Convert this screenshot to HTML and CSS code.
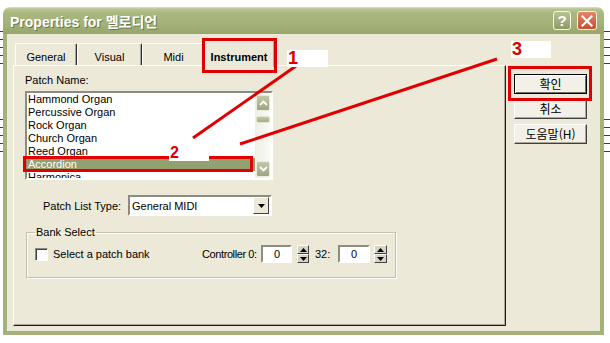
FILE: index.html
```html
<!DOCTYPE html>
<html lang="ko">
<head>
  <meta charset="UTF-8">
  <meta name="viewport" content="width=device-width, initial-scale=1.0">
  <title>Properties for 멜로디언</title>
  <link rel="stylesheet" href="styles.css">
</head>
<body>
  <!-- Score staves peeking out behind the dialog -->
  <div class="staves">
    <div class="staff staff-top"></div>
    <div class="staff staff-bottom"></div>
  </div>

  <!-- Dialog window -->
  <div class="window">
    <div class="titlebar">
      <span class="title">Properties for 멜로디언</span>
      <div class="caption-buttons">
        <span class="cap-btn help">?</span>
        <span class="cap-btn close">
          <svg width="12" height="12" viewBox="0 0 12 12"><path d="M1.5 1.5 L10.5 10.5 M10.5 1.5 L1.5 10.5" stroke="#fff" stroke-width="2.2" stroke-linecap="square"/></svg>
        </span>
      </div>
    </div>

    <div class="client">
      <div class="sheet">
        <div class="tabs">
          <div class="tab tab-general">General</div>
          <div class="tab tab-visual">Visual</div>
          <div class="tab tab-midi">Midi</div>
          <div class="tab tab-instrument active">Instrument</div>
        </div>

        <div class="panel">
          <div class="field-label">Patch Name:</div>
          <div class="listbox">
            <ul class="items">
              <li>Hammond Organ</li>
              <li>Percussive Organ</li>
              <li>Rock Organ</li>
              <li>Church Organ</li>
              <li>Reed Organ</li>
              <li class="selected">Accordion</li>
              <li>Harmonica</li>
            </ul>
            <div class="vscroll">
              <span class="sb-btn sb-up">
                <svg width="9" height="6" viewBox="0 0 9 6"><path d="M1 5 L4.5 1.5 L8 5" fill="none" stroke="#fff" stroke-width="1.8"/></svg>
              </span>
              <span class="sb-thumb"></span>
              <span class="sb-btn sb-down">
                <svg width="9" height="6" viewBox="0 0 9 6"><path d="M1 1 L4.5 4.5 L8 1" fill="none" stroke="#fff" stroke-width="1.8"/></svg>
              </span>
            </div>
          </div>

          <div class="type-row">
            <span class="type-label">Patch List Type:</span>
            <div class="combo">
              <span class="combo-text">General MIDI</span>
              <span class="drop-btn">
                <svg width="7" height="4" viewBox="0 0 7 4"><path d="M0 0 H7 L3.5 4 Z" fill="#000"/></svg>
              </span>
            </div>
          </div>

          <fieldset class="group">
            <legend>Bank Select</legend>
            <div class="bank-row">
              <span class="checkbox"></span>
              <span class="check-label">Select a patch bank</span>
              <span class="ctl-label">Controller 0:</span>
              <span class="edit">0</span>
              <span class="spin">
                <span class="spin-half"><svg width="7" height="4" viewBox="0 0 7 4"><path d="M0 4 H7 L3.5 0 Z" fill="#000"/></svg></span>
                <span class="spin-half"><svg width="7" height="4" viewBox="0 0 7 4"><path d="M0 0 H7 L3.5 4 Z" fill="#000"/></svg></span>
              </span>
              <span class="lsb-label">32:</span>
              <span class="edit edit-lsb">0</span>
              <span class="spin spin-lsb">
                <span class="spin-half"><svg width="7" height="4" viewBox="0 0 7 4"><path d="M0 4 H7 L3.5 0 Z" fill="#000"/></svg></span>
                <span class="spin-half"><svg width="7" height="4" viewBox="0 0 7 4"><path d="M0 0 H7 L3.5 4 Z" fill="#000"/></svg></span>
              </span>
            </div>
          </fieldset>
        </div>
      </div>

      <div class="buttons">
        <button class="btn default">확인</button>
        <button class="btn">취소</button>
        <button class="btn">도움말(H)</button>
      </div>
    </div>
  </div>

  <!-- Red tutorial marks drawn over the screenshot -->
  <svg class="marks" width="610" height="343" viewBox="0 0 610 343">
    <g fill="none" stroke="#e00000" stroke-width="3">
      <rect x="203.5" y="39.5" width="72" height="32"/>
      <rect x="24.5" y="157.5" width="227" height="13"/>
      <rect x="509.5" y="67.5" width="81" height="32"/>
      <line x1="296" y1="66" x2="193" y2="138"/>
      <line x1="497" y1="59" x2="240" y2="144"/>
    </g>
  </svg>
  <div class="tag tag-1">1</div>
  <div class="tag tag-2">2</div>
  <div class="tag tag-3">3</div>
</body>
</html>
```

FILE: styles.css
```css
/* Page and general type */
* {
  box-sizing: border-box;
}
body {
  position: relative;
  width: 610px;
  height: 343px;
  margin: 0;
  padding: 7px 0 0 3px;
  overflow: hidden;
  background: #fff;
  font-family: "Liberation Sans", Arial, sans-serif;
  font-size: 11px;
  color: #000;
}
/* Staff lines of the score behind the dialog */
.staves {
  position: absolute;
  top: 0;
  left: 0;
  width: 610px;
  height: 343px;
}
.staff {
  position: absolute;
  left: 0;
  right: 0;
  height: 33px;
  background: repeating-linear-gradient(to bottom, #2331b8 0, #2331b8 1px, transparent 1px, transparent 8px);
}
.staff-top {
  top: 31px;
}
.staff-bottom {
  top: 119px;
}
/* Window frame */
.window {
  position: relative;
  z-index: 1;
  width: 601px;
}
.titlebar {
  display: flex;
  align-items: center;
  height: 27px;
  padding: 0 7px 0 7px;
  border-radius: 7px 7px 0 0;
  background: linear-gradient(to bottom, #dbe2c0 0, #b9c592 2px, #a9b77e 6px, #a4b279 60%, #97a66b 100%);
}
.title {
  flex: 1;
  color: #fff;
  font-family: "Liberation Sans", "Noto Sans CJK KR", sans-serif;
  font-size: 14px;
  font-weight: bold;
  text-shadow: 1px 1px 0 #6c7b45;
}
.caption-buttons {
  display: flex;
  gap: 6px;
}
.cap-btn {
  display: flex;
  align-items: center;
  justify-content: center;
  height: 19px;
  border: 1px solid #f4f6ea;
  border-radius: 3px;
}
.help {
  width: 18px;
  color: #fff;
  font-size: 15px;
  font-weight: bold;
  background: linear-gradient(to bottom, #b9c392, #8e9b64);
}
.close {
  width: 20px;
  background: linear-gradient(to bottom, #e2866a, #c4502f);
}
.client {
  display: flex;
  height: 301px;
  padding: 6px 0 0 6px;
  background: #ece9d8;
  border: 4px solid #a4b17b;
  border-top: 0;
}
/* Property sheet with tabs */
.sheet {
  width: 493px;
}
.tabs {
  display: flex;
  align-items: flex-start;
  height: 25px;
  padding-left: 2px;
}
.tab {
  height: 22px;
  margin-top: 3px;
  padding-top: 3px;
  line-height: 20px;
  text-align: center;
  background: #ece9d8;
  border-top: 1px solid #fff;
  border-left: 1px solid #fff;
  border-right: 1px solid #2b2b2b;
  border-radius: 2px 2px 0 0;
  box-shadow: inset -1px 0 #aca899;
}
.tab-general {
  width: 62px;
}
.tab-visual {
  width: 65px;
}
.tab-midi {
  width: 63px;
}
.tab-instrument {
  width: 72px;
}
.tab.active {
  position: relative;
  z-index: 1;
  height: 27px;
  margin-top: 0;
  margin-left: -2px;
  padding-top: 6px;
  font-weight: bold;
}
.panel {
  height: 261px;
  padding: 7px 0 0 11px;
  border: 1px solid;
  border-color: #fff #1c1c1c #1c1c1c #fff;
  box-shadow: inset -1px -1px #aca899;
}
.field-label {
  height: 14px;
  line-height: 14px;
}
/* Patch list */
.listbox {
  display: flex;
  width: 248px;
  height: 89px;
  margin-top: 4px;
  overflow: hidden;
  background: #fff;
  border: 2px solid;
  border-color: #8e8c80 #fff #fff #8e8c80;
}
.items {
  flex: 1;
  margin: 0;
  padding: 0;
  list-style: none;
}
.items li {
  height: 13px;
  padding-left: 1px;
  line-height: 13px;
  white-space: nowrap;
}
.items li.selected {
  color: #fff;
  background: #93a070;
}
.vscroll {
  display: flex;
  flex-direction: column;
  width: 16px;
  padding: 2px 1px 1px 1px;
  background: linear-gradient(to right, #efeee6, #fbfbf8);
}
.sb-btn {
  display: flex;
  align-items: center;
  justify-content: center;
  height: 16px;
  border: 1px solid #e9ecdc;
  border-radius: 2px;
  background: linear-gradient(to bottom, #c3c9a8, #9ea67f);
}
.sb-thumb {
  height: 7px;
  margin-top: 5px;
  border: 1px solid #e2e5d4;
  border-radius: 2px;
  background: linear-gradient(to bottom, #c3c9a8, #a4ac86);
}
.sb-down {
  margin-top: auto;
}
/* Patch list type */
.type-row {
  display: flex;
  align-items: center;
  height: 21px;
  margin-top: 15px;
  padding-left: 18px;
}
.type-label {
  width: 85px;
}
.combo {
  display: flex;
  align-items: center;
  width: 144px;
  height: 21px;
  padding: 0 1px 0 2px;
  background: #fff;
  border: 2px solid;
  border-color: #8e8c80 #fff #fff #8e8c80;
}
.combo-text {
  flex: 1;
}
.drop-btn,
.spin-half {
  display: flex;
  align-items: center;
  justify-content: center;
  background: #ece9d8;
  border: 1px solid;
  border-color: #fff #404040 #404040 #fff;
}
.drop-btn {
  width: 16px;
  height: 17px;
}
/* Bank select group */
.group {
  width: 365px;
  margin: 10px 0 0 1px;
  padding: 6px 8px 14px 8px;
  border: 1px solid #c2bfae;
  box-shadow: inset 1px 1px #fff, 1px 1px #fff;
}
.group legend {
  padding: 0 1px;
  line-height: 13px;
}
.bank-row {
  display: flex;
  align-items: center;
  height: 18px;
  white-space: nowrap;
}
.checkbox {
  width: 13px;
  height: 13px;
  background: #fff;
  border: 1px solid;
  border-color: #8e8c80 #fff #fff #8e8c80;
  box-shadow: inset 1px 1px #404040;
}
.check-label {
  width: 149px;
  margin-left: 5px;
}
.ctl-label {
  width: 59px;
  letter-spacing: -0.4px;
}
.edit {
  width: 31px;
  height: 18px;
  padding-left: 11px;
  line-height: 14px;
  background: #fff;
  border: 2px solid;
  border-color: #8e8c80 #fff #fff #8e8c80;
}
.spin {
  display: flex;
  flex-direction: column;
  width: 12px;
  height: 18px;
  margin-left: 5px;
}
.spin-half {
  height: 9px;
  background: #d6d3c6;
}
.lsb-label {
  width: 23px;
  margin-left: 6px;
}
.edit-lsb {
  width: 32px;
}
.spin-lsb {
  width: 13px;
  margin-left: 4px;
}
/* Dialog buttons */
.buttons {
  display: flex;
  flex-direction: column;
  gap: 5px;
  margin: 34px 0 0 8px;
}
.btn {
  width: 73px;
  height: 20px;
  padding: 0;
  font-family: "Noto Sans CJK KR", "Liberation Sans", sans-serif;
  font-size: 12px;
  line-height: 16px;
  color: #000;
  background: #f3f1e7;
  border: 1px solid;
  border-color: #fff #404040 #404040 #fff;
  box-shadow: inset -1px -1px #aca899;
}
.btn.default {
  border-color: #000;
  box-shadow: inset 1px 1px #fff, inset -1px -1px #716f64;
}
/* Tutorial annotations */
.marks {
  position: absolute;
  top: 0;
  left: 0;
  z-index: 2;
}
.tag {
  position: absolute;
  z-index: 3;
  padding-left: 1px;
  background: #fff;
  color: #d80000;
  font-weight: bold;
  font-size: 18px;
  line-height: 17px;
}
.tag-1 {
  left: 287px;
  top: 50px;
  width: 41px;
  height: 17px;
}
.tag-2 {
  left: 169px;
  top: 145px;
  width: 40px;
  height: 16px;
  font-size: 16px;
  line-height: 16px;
}
.tag-3 {
  left: 511px;
  top: 41px;
  width: 40px;
  height: 17px;
}
```
